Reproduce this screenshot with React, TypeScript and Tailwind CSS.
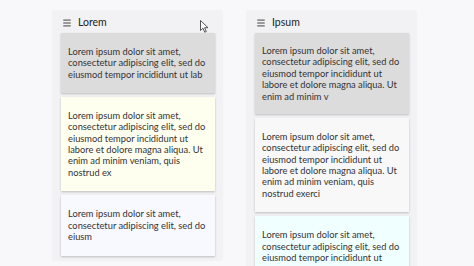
import { Menu } from 'lucide-react'

type Card = { bg: string; h: string; lines: string[] }

const columns: { title: string; cards: Card[] }[] = [
  {
    title: 'Lorem',
    cards: [
      {
        bg: 'bg-[#dcdcdc]',
        h: 'h-[60px]',
        lines: ['Lorem ipsum dolor sit amet,', 'consectetur adipiscing elit, sed do', 'eiusmod tempor incididunt ut lab'],
      },
      {
        bg: 'bg-[#fffff0]',
        h: 'h-[94px]',
        lines: [
          'Lorem ipsum dolor sit amet,',
          'consectetur adipiscing elit, sed do',
          'eiusmod tempor incididunt ut',
          'labore et dolore magna aliqua. Ut',
          'enim ad minim veniam, quis',
          'nostrud ex',
        ],
      },
      {
        bg: 'bg-[#f8f8ff]',
        h: 'h-[61px]',
        lines: ['Lorem ipsum dolor sit amet,', 'consectetur adipiscing elit, sed do', 'eiusm'],
      },
    ],
  },
  {
    title: 'Ipsum',
    cards: [
      {
        bg: 'bg-[#dcdcdc]',
        h: 'h-[81px]',
        lines: [
          'Lorem ipsum dolor sit amet,',
          'consectetur adipiscing elit, sed do',
          'eiusmod tempor incididunt ut',
          'labore et dolore magna aliqua. Ut',
          'enim ad minim v',
        ],
      },
      {
        bg: 'bg-[#f8f8f9]',
        h: 'h-[94px]',
        lines: [
          'Lorem ipsum dolor sit amet,',
          'consectetur adipiscing elit, sed do',
          'eiusmod tempor incididunt ut',
          'labore et dolore magna aliqua. Ut',
          'enim ad minim veniam, quis',
          'nostrud exerci',
        ],
      },
      {
        bg: 'bg-[#f0ffff]',
        h: 'h-[95px]',
        lines: [
          'Lorem ipsum dolor sit amet,',
          'consectetur adipiscing elit, sed do',
          'eiusmod tempor incididunt ut',
          'labore et dolore magna aliqua. Ut',
          'enim ad minim veniam, quis',
          'nostrud exercitation',
        ],
      },
    ],
  },
]

function Cursor() {
  return (
    <svg className="absolute left-[200px] top-[20px]" width="9" height="13" viewBox="0 0 9 13">
      <path d="M0.5 0.5 L0.5 10.5 L3 8.2 L4.8 12.2 L6.3 11.5 L4.6 7.7 L8 7.7 Z" fill="#fff" stroke="#444" strokeWidth="0.9" strokeLinejoin="round" />
    </svg>
  )
}

export default function App() {
  return (
    <div className="relative h-[266px] w-[474px] overflow-hidden bg-[#f8f8fb] pl-[53px] pt-[11px] font-['Lato',sans-serif] text-[#333]">
      <div className="flex items-start gap-[25px]">
        {columns.map(col => (
          <div key={col.title} className="w-[169px] bg-[#f2f2f4] pl-[8px] pr-[7px] pb-[4px] shadow-[0_0_2px_rgba(0,0,0,0.08)]">
            <div className="flex h-[22px] items-center gap-[6px] pl-[1px] pt-[1px] text-[10.5px] text-[#222]">
              <Menu className="h-[10px] w-[10px] text-[#333]" strokeWidth={2.2} />
              <span>{col.title}</span>
            </div>
            <div className="flex flex-col gap-[4px]">
              {col.cards.map((c, i) => (
                <div
                  key={i}
                  className={`flex items-center px-[7px] text-[9.3px] leading-[11.4px] shadow-[0_1px_2px_rgba(0,0,0,0.22)] ${c.bg} ${c.h}`}
                >
                  <p className="whitespace-nowrap">
                    {c.lines.map((l, j) => (
                      <span key={j} className="block">{l}</span>
                    ))}
                  </p>
                </div>
              ))}
            </div>
          </div>
        ))}
      </div>
      <Cursor />
    </div>
  )
}
